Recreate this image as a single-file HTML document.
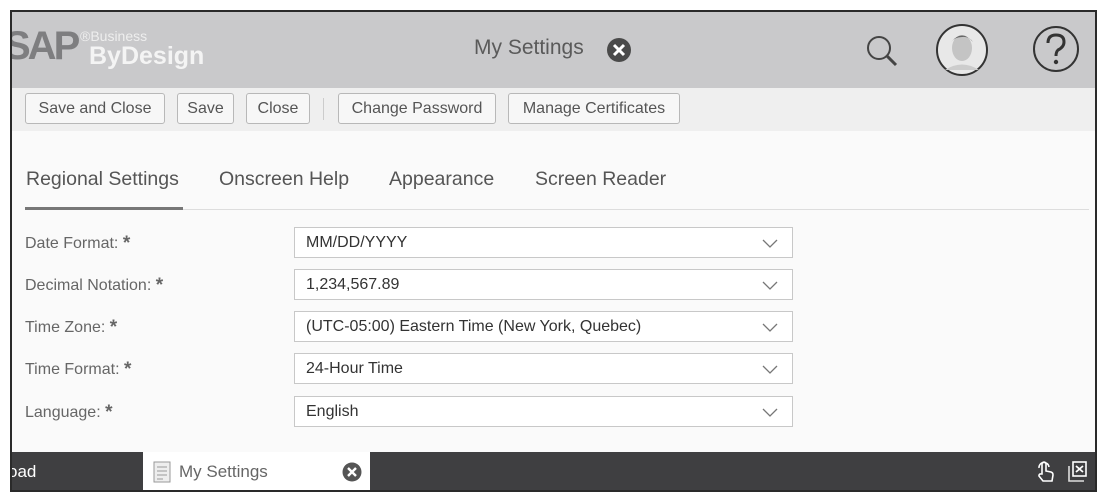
<!DOCTYPE html>
<html><head><meta charset="utf-8"><style>
*{margin:0;padding:0;box-sizing:border-box}
body{width:1107px;height:502px;background:#fff;font-family:"Liberation Sans",sans-serif;position:relative;overflow:hidden}
.frame{position:absolute;left:10px;top:10px;width:1087px;height:482px;border:2px solid #2a2a2a;background:#fafafa;overflow:hidden}
.hdr{position:absolute;left:0;top:0;right:0;height:76px;background:#c9c9cb}
.tb{position:absolute;left:0;top:76px;right:0;height:43px;background:#efefef}
.btn{position:absolute;top:5px;height:31px;border:1px solid #b8b8b8;border-radius:3px;background:#f7f7f7;color:#555;font-size:16px;line-height:29px;text-align:center}
.a{position:absolute;color:#555}
.tab{position:absolute;top:156px;font-size:19.5px;color:#555}
.lbl{position:absolute;left:13px;font-size:16px;color:#666}
.lbl b{font-size:19px;font-weight:bold;position:relative;top:1px}
.fld{position:absolute;left:282px;width:499px;height:31px;border:1px solid #c8c8c8;background:#fff;font-size:16px;color:#333;line-height:29px;padding-left:11px}
.fld svg{position:absolute;right:14px;top:11px}
.bot{position:absolute;left:0;top:440px;right:0;height:40px;background:#3f3f41}
</style></head><body>
<div class="frame">
 <div class="hdr">
  <div class="a" style="left:-8px;top:12px;font-size:40px;font-weight:bold;color:#7e7e80;letter-spacing:-3px">SAP</div>
  <div class="a" style="left:68px;top:16px;font-size:14px;color:#eee">®Business</div>
  <div class="a" style="left:77px;top:30px;font-size:25px;color:#f4f4f4;font-weight:bold">ByDesign</div>
  <div class="a" style="left:462px;top:24px;font-size:21px;color:#5a5a5a">My Settings</div>
  <svg style="position:absolute;left:594px;top:25px" width="26" height="26" viewBox="0 0 26 26"><circle cx="13" cy="13" r="12" fill="#4a4a4a"/><path d="M8 8L18 18M18 8L8 18" stroke="#fff" stroke-width="3"/></svg>
  <svg style="position:absolute;left:850px;top:20px" width="40" height="40" viewBox="0 0 40 40"><circle cx="17" cy="16" r="11" fill="none" stroke="#444" stroke-width="2"/><path d="M25 24L34 33" stroke="#444" stroke-width="3"/></svg>
  <svg style="position:absolute;left:923px;top:11px" width="54" height="54" viewBox="0 0 54 54"><circle cx="27" cy="27" r="25" fill="#e8e8e8" stroke="#333" stroke-width="2"/><ellipse cx="27" cy="25" rx="10" ry="13" fill="#c4c4c4"/><path d="M16 19Q27 6 38 19Q34 13 27 14Q20 14 16 19Z" fill="#666"/><path d="M10 47Q27 36 44 47" fill="#ccc"/></svg>
  <svg style="position:absolute;left:1019px;top:12px" width="50" height="50" viewBox="0 0 50 50"><circle cx="25" cy="25" r="22" fill="none" stroke="#333" stroke-width="2"/><path d="M17 19Q17 11 25 11Q33 11 33 18Q33 23 27 26Q25 28 25 32" fill="none" stroke="#333" stroke-width="3"/><circle cx="25" cy="38" r="2.2" fill="#333"/></svg>
 </div>
 <div class="tb">
  <div class="btn" style="left:13px;width:140px">Save and Close</div>
  <div class="btn" style="left:165px;width:57px">Save</div>
  <div class="btn" style="left:234px;width:64px">Close</div>
  <div style="position:absolute;left:311px;top:10px;width:1px;height:22px;background:#ccc"></div>
  <div class="btn" style="left:326px;width:158px">Change Password</div>
  <div class="btn" style="left:496px;width:172px">Manage Certificates</div>
 </div>
 <div class="tab" style="left:14px">Regional Settings</div>
 <div class="tab" style="left:207px">Onscreen Help</div>
 <div class="tab" style="left:377px">Appearance</div>
 <div class="tab" style="left:523px">Screen Reader</div>
 <div style="position:absolute;left:13px;top:197px;width:1064px;height:1px;background:#ddd"></div>
 <div style="position:absolute;left:13px;top:195px;width:158px;height:3px;background:#777"></div>

 <div class="lbl" style="top:220px">Date Format: <b>*</b></div>
 <div class="lbl" style="top:262px">Decimal Notation: <b>*</b></div>
 <div class="lbl" style="top:304px">Time Zone: <b>*</b></div>
 <div class="lbl" style="top:346px">Time Format: <b>*</b></div>
 <div class="lbl" style="top:389px">Language: <b>*</b></div>

 <div class="fld" style="top:215px">MM/DD/YYYY<svg width="16" height="9"><path d="M1 1L8 8L15 1" fill="none" stroke="#777" stroke-width="1.3"/></svg></div>
 <div class="fld" style="top:257px">1,234,567.89<svg width="16" height="9"><path d="M1 1L8 8L15 1" fill="none" stroke="#777" stroke-width="1.3"/></svg></div>
 <div class="fld" style="top:299px">(UTC-05:00) Eastern Time (New York, Quebec)<svg width="16" height="9"><path d="M1 1L8 8L15 1" fill="none" stroke="#777" stroke-width="1.3"/></svg></div>
 <div class="fld" style="top:341px">24-Hour Time<svg width="16" height="9"><path d="M1 1L8 8L15 1" fill="none" stroke="#777" stroke-width="1.3"/></svg></div>
 <div class="fld" style="top:384px">English<svg width="16" height="9"><path d="M1 1L8 8L15 1" fill="none" stroke="#777" stroke-width="1.3"/></svg></div>

 <div class="bot">
  <div class="a" style="left:-4px;top:10px;font-size:17px;color:#fff">oad</div>
  <div style="position:absolute;left:131px;top:0;width:227px;height:40px;background:#fff">
   <svg style="position:absolute;left:10px;top:9px" width="18" height="22"><rect x="1" y="1" width="16" height="20" fill="#eee" stroke="#999"/><path d="M4 6H14M4 10H14M4 14H14M4 18H10" stroke="#999"/></svg>
   <div class="a" style="left:36px;top:10px;font-size:17px;color:#666">My Settings</div>
   <svg style="position:absolute;left:199px;top:10px" width="20" height="20"><circle cx="10" cy="10" r="9.5" fill="#555"/><path d="M6 6L14 14M14 6L6 14" stroke="#fff" stroke-width="2.4"/></svg>
  </div>
  <svg style="position:absolute;left:1022px;top:8px" width="22" height="24" viewBox="0 0 22 24"><path d="M8 14V4a2 2 0 014 0v7l5 1a3 3 0 012 3l-1 6H9L5 16a1.6 1.6 0 012-2z" fill="none" stroke="#fff" stroke-width="1.6"/><path d="M5 8a5 5 0 0110-1" fill="none" stroke="#fff" stroke-width="1.5"/></svg>
  <svg style="position:absolute;left:1054px;top:8px" width="22" height="24"><path d="M3 6V21H18" fill="none" stroke="#ddd" stroke-width="1.6"/><rect x="7" y="2" width="13" height="14" fill="none" stroke="#fff" stroke-width="1.6"/><path d="M10 6L17 12M17 6L10 12" stroke="#fff" stroke-width="1.8"/></svg>
 </div>
</div>
</body></html>
